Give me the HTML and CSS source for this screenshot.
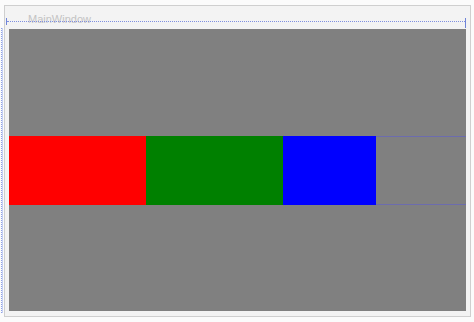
FILE: index.html
```html
<!DOCTYPE html>
<html>
<head>
<meta charset="utf-8">
<link rel="stylesheet" href="styles.css">
</head>
<body>
<div class="stage">
  <div class="frame">
    <div class="titlebar"><span class="title">MainWindow</span></div>
    <div class="canvas">
      <div class="bars">
        <div class="bar red"></div>
        <div class="bar green"></div>
        <div class="bar blue"></div>
        <div class="bar empty"></div>
      </div>
    </div>
  </div>
  <div class="guide-h"></div>
  <div class="tick tick-left"></div>
  <div class="tick tick-right"></div>
  <div class="guide-v"></div>
</div>
</body>
</html>
```
FILE: styles.css
```css
html, body {
  margin: 0;
  padding: 0;
  background: #fbfbfb;
}
.stage {
  position: relative;
  width: 474px;
  height: 322px;
  padding: 5px 0 0 4px;
  box-sizing: border-box;
  font-family: "Liberation Sans", Arial, sans-serif;
}
.frame {
  width: 467px;
  height: 312px;
  box-sizing: border-box;
  border: 1px solid #cfcfcf;
  background: #f3f3f3;
  display: flex;
  flex-direction: column;
  padding: 0 4px 5px 4px;
}
.titlebar {
  height: 23px;
  flex: 0 0 23px;
  display: flex;
  align-items: center;
  padding-left: 19px;
  padding-top: 2px;
  box-sizing: border-box;
}
.title {
  font-size: 11px;
  color: #c3c3c3;
}
.canvas {
  flex: 1;
  background: #808080;
  display: flex;
  align-items: center;
}
.bars {
  display: flex;
  width: 100%;
  height: 69px;
}
.bar {
  height: 100%;
}
.red { flex: 0 0 137px; background: #ff0000; }
.green { flex: 0 0 137px; background: #008000; }
.blue { flex: 0 0 93px; background: #0000ff; }
.empty {
  flex: 1;
  box-sizing: border-box;
  border-top: 1px solid #6c6cae;
  border-bottom: 1px solid #6c6cae;
}
.guide-h {
  position: absolute;
  left: 7px;
  top: 21px;
  width: 458px;
  border-top: 1px dotted #7f8fe0;
}
.tick {
  position: absolute;
  width: 1px;
  background: #6f84d8;
}
.tick-left {
  left: 6px;
  top: 18px;
  height: 7px;
}
.tick-right {
  left: 465px;
  top: 18px;
  height: 10px;
}
.guide-v {
  position: absolute;
  left: 1px;
  top: 28px;
  width: 2px;
  height: 285px;
  border-left: 1px dotted #8ea0e6;
  border-right: 1px solid #c5d0f3;
  box-sizing: border-box;
}
```
